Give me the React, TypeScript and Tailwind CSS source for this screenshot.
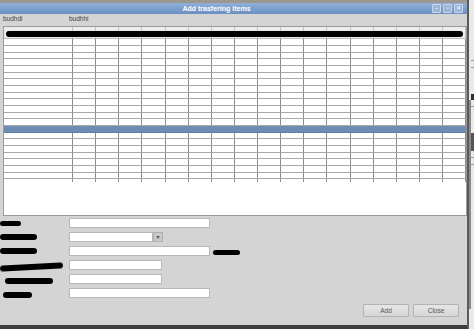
import React from "react"

const rowHeights = Array.from({ length: 21 }, (_, i) => ["h-[7px]", "h-[7px]", "h-[6px]"][i % 3])
const cols = Array.from({ length: 17 }, (_, i) => i)

const Scribble = ({ className }: { className: string }) => (
  <div className={`bg-black rounded-full blur-[0.6px] ${className}`} />
)

const Field = ({ width }: { width: string }) => (
  <div className={`h-[10px] ${width} bg-white border border-[#b9b9b9]`} />
)

const TableRow = ({ h, selected }: { h: string; selected: boolean }) => (
  <div className={`${h} flex border-b ${selected ? "bg-[#6d8db5] border-[#5f7fa8]" : "bg-white border-[#a9a9a9]"}`}>
    <div className={`w-[69px] shrink-0 border-r ${selected ? "border-[#6d8db5]" : "border-[#8c8c8c]"}`} />
    {cols.map((c) => (
      <div key={c} className={`flex-1 border-r ${selected ? "border-[#6d8db5]" : "border-[#8c8c8c]"}`} />
    ))}
  </div>
)

export default function App() {
  return (
    <div className="w-[474px] h-[329px] flex bg-[#cfcfcf] overflow-hidden" style={{ fontFamily: '"Liberation Sans", Arial, sans-serif' }}>
      <div className="w-[467px] flex flex-col">
        <div className="h-[3px] bg-[#9c978f]" />
        <div className="h-[11px] bg-gradient-to-b from-[#8fb0da] to-[#6b8fc0] flex items-center relative">
          <div className="flex-1 text-center text-white font-bold text-[7px] leading-none pr-[34px]">Add trasfering items</div>
          <div className="absolute right-[4px] top-[1px] flex gap-[2px]">
            {["–", "▫", "✕"].map((g, i) => (
              <div key={i} className="w-[9px] h-[9px] rounded-[1px] bg-[#9db6d8] border border-[#c7d6ea] text-white text-[6px] leading-[7px] text-center">
                {g}
              </div>
            ))}
          </div>
        </div>

        <div className="flex-1 bg-[#d4d4d4] flex flex-col">
          <div className="h-[12px] flex items-center pl-[3px] text-[6.5px] text-[#444] leading-none pb-[2px]">
            <span className="w-[66px]">budhdi</span>
            <span>budhhi</span>
          </div>

          <div className="ml-[3px] h-[190px] border border-[#9a9a9a] bg-white flex flex-col">
            <div className="h-[12px] bg-[#ececec] relative flex border-b border-[#bdbdbd]">
              <div className="w-[69px] shrink-0 border-r border-[#c4c4c4]" />
              {cols.map((c) => (
                <div key={c} className="flex-1 border-r border-[#c4c4c4]" />
              ))}
              <Scribble className="absolute left-[2px] right-[3px] top-[4px] h-[6px]" />
            </div>
            {rowHeights.map((h, i) => (
              <TableRow key={i} h={h} selected={i === 13} />
            ))}
            <div className="h-[3px] flex">
              <div className="w-[69px] shrink-0 border-r border-[#8c8c8c]" />
              {cols.map((c) => (
                <div key={c} className="flex-1 border-r border-[#8c8c8c]" />
              ))}
            </div>
          </div>

          <div className="flex flex-col gap-[4px] pt-[2px]">
            <div className="flex items-center h-[10px]">
              <div className="w-[69px]"><Scribble className="w-[21px] h-[5px] mt-[1px]" /></div>
              <Field width="w-[141px]" />
            </div>
            <div className="flex items-center h-[10px]">
              <div className="w-[69px]"><Scribble className="w-[37px] h-[6px]" /></div>
              <div className="w-[84px] h-[10px] bg-white border border-[#b9b9b9]" />
              <div className="w-[10px] h-[10px] bg-[#c9c9c9] border border-[#b0b0b0] flex items-center justify-center">
                <div className="w-0 h-0 border-l-[2px] border-r-[2px] border-t-[3px] border-l-transparent border-r-transparent border-t-[#666]" />
              </div>
            </div>
            <div className="flex items-center h-[10px]">
              <div className="w-[69px]"><Scribble className="w-[37px] h-[6px]" /></div>
              <Field width="w-[141px]" />
              <Scribble className="w-[27px] h-[5px] ml-[3px] mt-[2px]" />
            </div>
            <div className="flex items-center h-[10px]">
              <div className="w-[69px]"><Scribble className="w-[63px] h-[6px] mt-[3px] -rotate-3" /></div>
              <Field width="w-[93px]" />
            </div>
            <div className="flex items-center h-[10px]">
              <div className="w-[69px] pl-[5px]"><Scribble className="w-[48px] h-[6px] mt-[4px]" /></div>
              <Field width="w-[93px]" />
            </div>
            <div className="flex items-center h-[10px]">
              <div className="w-[69px] pl-[3px]"><Scribble className="w-[29px] h-[6px] mt-[4px]" /></div>
              <Field width="w-[141px]" />
            </div>
          </div>

          <div className="flex justify-end gap-[4px] pr-[8px] mt-[6px]">
            {["Add", "Close"].map((b) => (
              <div key={b} className="w-[46px] h-[13px] bg-gradient-to-b from-[#e6e6e6] to-[#d6d6d6] border border-[#b3b3b3] rounded-[1px] text-[6.5px] text-[#555] flex items-center justify-center">
                {b}
              </div>
            ))}
          </div>
          <div className="flex-1" />
        </div>
        <div className="h-[4px] bg-[#3e3e3e]" />
      </div>
      <div className="flex-1 flex bg-[#e9e9e9] border-l-2 border-[#5a5a5a]">
        <div className="w-[2px] bg-[#8a8a8a] mt-[100px] mb-[20px]" />
        <div className="flex-1 flex flex-col gap-[6px] pt-[60px]">
          <div className="h-[1px] bg-[#999]" />
          <div className="h-[1px] bg-[#999]" />
          <div className="h-[6px] bg-[#333] mt-[20px]" />
          <div className="h-[1px] bg-[#999]" />
          <div className="h-[18px] bg-[#555] mt-[20px]" />
          <div className="h-[1px] bg-[#999]" />
          <div className="h-[1px] bg-[#999]" />
        </div>
      </div>
    </div>
  )
}
